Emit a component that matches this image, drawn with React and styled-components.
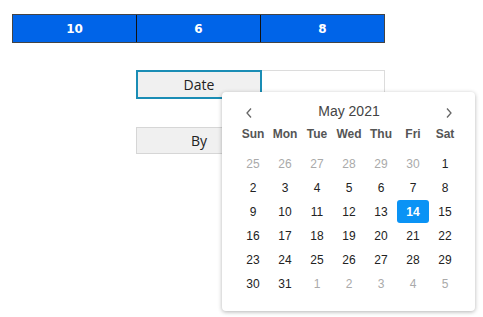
import styled, { createGlobalStyle } from "styled-components";

const GlobalStyle = createGlobalStyle`
  html, body {
    margin: 0;
    padding: 0;
    background: #ffffff;
    font-family: "Liberation Sans", Arial, sans-serif;
  }
`;

const weekDays = ["Sun", "Mon", "Tue", "Wed", "Thu", "Fri", "Sat"];

const buildDays = () => {
  const days = [];
  [25, 26, 27, 28, 29, 30].forEach((d) => days.push({ d, out: true }));
  for (let d = 1; d <= 31; d++) days.push({ d, out: false, selected: d === 14 });
  [1, 2, 3, 4, 5].forEach((d) => days.push({ d, out: true }));
  return days;
};

const App = () => {
  return (
    <Page>
      <GlobalStyle />
      <CountRow>
        <CountCell>10</CountCell>
        <CountCell>6</CountCell>
        <CountCell>8</CountCell>
      </CountRow>

      <Form>
        <FieldRow>
          <DateButton>Date</DateButton>
          <TextInput />
          <Calendar>
            <CalHeader>
              <NavArrow>
                <svg width="8" height="12" viewBox="0 0 8 12">
                  <path d="M6 1.5 L2 6 L6 10.5" fill="none" stroke="#666" strokeWidth="1.3" />
                </svg>
              </NavArrow>
              <MonthTitle>May 2021</MonthTitle>
              <NavArrow>
                <svg width="8" height="12" viewBox="0 0 8 12">
                  <path d="M2 1.5 L6 6 L2 10.5" fill="none" stroke="#666" strokeWidth="1.3" />
                </svg>
              </NavArrow>
            </CalHeader>
            <WeekRow>
              {weekDays.map((w) => (
                <WeekDay key={w}>{w}</WeekDay>
              ))}
            </WeekRow>
            <DayGrid>
              {buildDays().map((day, i) => (
                <Day key={i} $out={day.out} $selected={day.selected}>
                  {day.d}
                </Day>
              ))}
            </DayGrid>
          </Calendar>
        </FieldRow>
        <ByButton>By</ByButton>
      </Form>
    </Page>
  );
};

const Page = styled.div`
  padding: 14px 0 0 12px;
  width: 483px;
  height: 317px;
  box-sizing: border-box;
`;

const CountRow = styled.div`
  display: flex;
  width: 373px;
  height: 29px;
  border: 1px solid #444;
  box-sizing: border-box;
  background: #0064e8;
`;

const CountCell = styled.div`
  flex: 1;
  display: flex;
  align-items: center;
  justify-content: center;
  color: #ffffff;
  font-family: "DejaVu Sans", Verdana, sans-serif;
  font-weight: bold;
  font-size: 12px;
  & + & {
    border-left: 1px solid #111;
  }
`;

const Form = styled.div`
  margin: 27px 0 0 124px;
  display: flex;
  flex-direction: column;
  gap: 28px;
`;

const FieldRow = styled.div`
  position: relative;
  display: flex;
`;

const DateButton = styled.div`
  width: 126px;
  height: 29px;
  box-sizing: border-box;
  border: 2px solid #1a8db5;
  background: #f0f0f0;
  display: flex;
  align-items: center;
  justify-content: center;
  font-family: "Open Sans", "Noto Sans", sans-serif;
  font-size: 14px;
  color: #222;
`;

const TextInput = styled.div`
  width: 123px;
  height: 29px;
  box-sizing: border-box;
  border: 1px solid #dcdcdc;
  border-left: none;
  background: #fff;
`;

const ByButton = styled.div`
  width: 160px;
  height: 27px;
  box-sizing: border-box;
  border: 1px solid #d6d6d6;
  background: #f0f0f0;
  display: flex;
  align-items: center;
  padding-left: 54px;
  font-family: "Open Sans", "Noto Sans", sans-serif;
  font-size: 14px;
  color: #222;
`;

const Calendar = styled.div`
  position: absolute;
  left: 86px;
  top: 22px;
  width: 253px;
  height: 219px;
  box-sizing: border-box;
  padding: 8px 14px 0 15px;
  background: #fff;
  border-radius: 4px;
  box-shadow: 0 1px 4px rgba(0, 0, 0, 0.3);
  z-index: 2;
`;

const CalHeader = styled.div`
  display: flex;
  align-items: center;
  justify-content: space-between;
  height: 22px;
  padding: 0 8px;
`;

const NavArrow = styled.span`
  display: flex;
  align-items: center;
  margin-top: 4px;
`;

const MonthTitle = styled.span`
  font-size: 14px;
  color: #444;
`;

const WeekRow = styled.div`
  display: grid;
  grid-template-columns: repeat(7, 32px);
  height: 24px;
  align-items: center;
`;

const WeekDay = styled.span`
  text-align: center;
  font-size: 12px;
  font-weight: bold;
  color: #555;
`;

const DayGrid = styled.div`
  display: grid;
  grid-template-columns: repeat(7, 32px);
  grid-auto-rows: 24px;
  margin-top: 6px;
`;

const Day = styled.span`
  display: flex;
  align-items: center;
  justify-content: center;
  height: 23px;
  font-size: 12px;
  border-radius: 3px;
  color: ${({ $out, $selected }) => ($selected ? "#fff" : $out ? "#aaa" : "#222")};
  background: ${({ $selected }) => ($selected ? "#0a93f5" : "transparent")};
  font-weight: ${({ $selected }) => ($selected ? "bold" : "normal")};
`;

export default App;
